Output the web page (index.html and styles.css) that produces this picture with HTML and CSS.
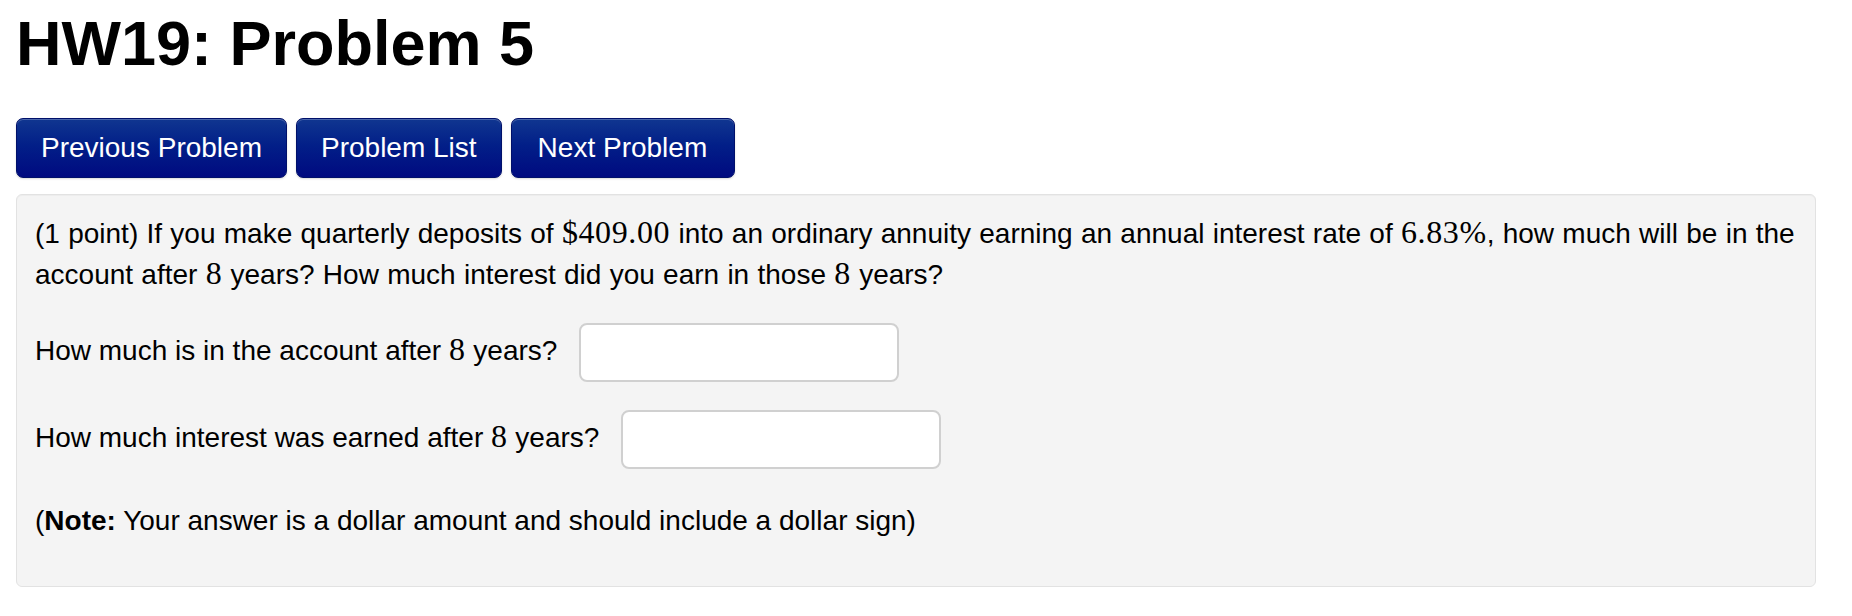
FILE: index.html
```html
<!DOCTYPE html>
<html lang="en">
<head>
<meta charset="utf-8">
<title>HW19: Problem 5</title>
<link rel="stylesheet" href="styles.css">
</head>
<body>
<div class="page">
  <h1 class="title">HW19: Problem 5</h1>
  <nav class="nav">
    <a class="btn" href="#">Previous Problem</a>
    <a class="btn" href="#">Problem List</a>
    <a class="btn btn-next" href="#">Next Problem</a>
  </nav>
  <div class="well">
    <p class="para para-intro">(1 point) If you make quarterly deposits of <span class="math">$409.00</span> into an ordinary annuity earning an annual interest rate of <span class="math">6.83%</span>, how much will be in the<br>account after <span class="math">8</span> years? How much interest did you earn in those <span class="math">8</span> years?</p>
    <p class="para">How much is in the account after <span class="math">8</span> years? <input class="answer" type="text"></p>
    <p class="para para-last-answer">How much interest was earned after <span class="math">8</span> years? <input class="answer" type="text"></p>
    <p class="para">(<b>Note:</b> Your answer is a dollar amount and should include a dollar sign)</p>
  </div>
</div>
</body>
</html>
```

FILE: styles.css
```css
html, body {
  margin: 0;
  padding: 0;
  background: #ffffff;
}

body {
  font-family: "Liberation Sans", Arial, Helvetica, sans-serif;
  color: #000;
}

.page {
  padding: 8px 36px 0 16px;
}

.title {
  margin: 0;
  font-size: 63px;
  line-height: 70px;
  font-weight: bold;
  color: #000;
}

.nav {
  display: flex;
  gap: 9px;
  margin-top: 40px;
}

.btn {
  display: block;
  padding: 13px 24px;
  font-size: 28px;
  line-height: 32px;
  color: #fff;
  text-decoration: none;
  background: linear-gradient(to bottom, #103690 0%, #021f88 45%, #000a80 100%);
  border: 1px solid #00106a;
  border-radius: 7px;
  box-shadow: inset 0 1px 0 rgba(255, 255, 255, 0.25), 0 1px 2px rgba(0, 0, 0, 0.15);
}

.btn-next {
  padding-left: 26px;
  padding-right: 27px;
}

.well {
  margin-top: 16px;
  padding: 18px 18px 17px 18px;
  background: #f4f4f4;
  border: 1px solid #e2e2e2;
  border-radius: 6px;
  box-shadow: inset 0 1px 1px rgba(0, 0, 0, 0.03);
}

.para {
  margin: 0 0 28px 0;
  font-size: 28px;
  line-height: 41px;
}

.para-intro {
  word-spacing: 0.5px;
}

.para-last-answer {
  margin-bottom: 31px;
}

.math {
  font-family: "Liberation Serif", "Times New Roman", serif;
  font-size: 32px;
  line-height: 1;
  letter-spacing: 0.6px;
}

.answer {
  width: 320px;
  height: 59px;
  box-sizing: border-box;
  margin-left: 14px;
  vertical-align: middle;
  background: #fff;
  border: 2px solid #d0d0d0;
  border-radius: 8px;
  padding: 0 10px;
  font-size: 28px;
  font-family: "Liberation Sans", Arial, sans-serif;
}
```
